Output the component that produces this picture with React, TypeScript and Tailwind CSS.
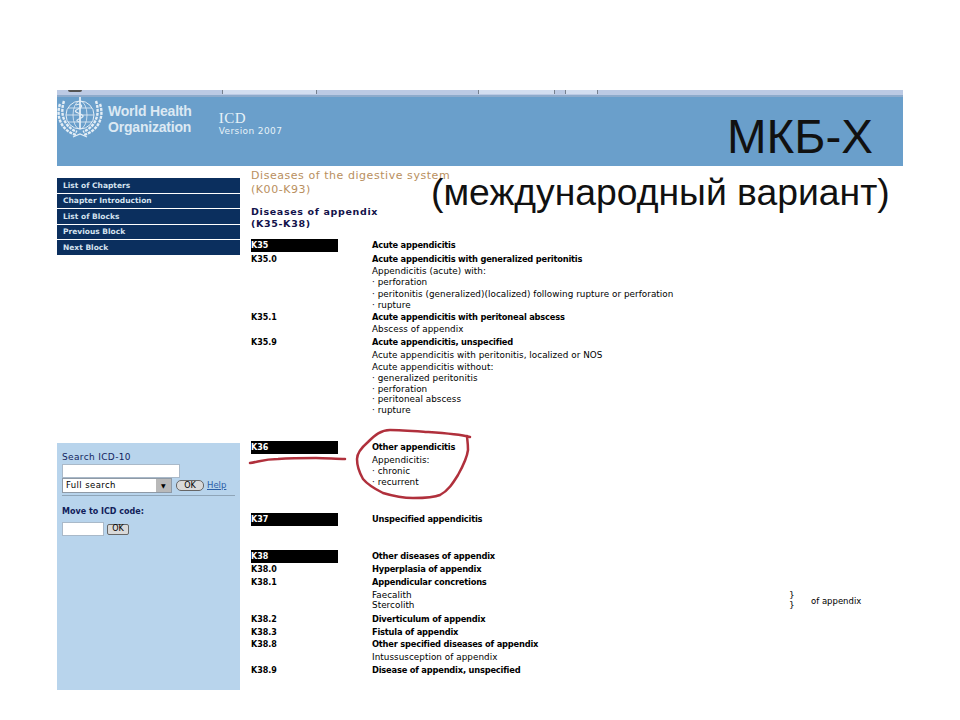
const NAV = ['List of Chapters', 'Chapter Introduction', 'List of Blocks', 'Previous Block', 'Next Block']

type Row = { code?: string; bar?: boolean; bold?: boolean; text?: string; h: string; brace?: boolean; note?: boolean }

const ROWS: Row[] = [
  { code: 'K35', bar: true, bold: true, text: 'Acute appendicitis', h: 'h-[14px]' },
  { code: 'K35.0', bold: true, text: 'Acute appendicitis with generalized peritonitis', h: 'h-[12px]' },
  { text: 'Appendicitis (acute) with:', h: 'h-[11px]' },
  { text: '· perforation', h: 'h-[12px]' },
  { text: '· peritonitis (generalized)(localized) following rupture or perforation', h: 'h-[11px]' },
  { text: '· rupture', h: 'h-[12px]' },
  { code: 'K35.1', bold: true, text: 'Acute appendicitis with peritoneal abscess', h: 'h-[12px]' },
  { text: 'Abscess of appendix', h: 'h-[13px]' },
  { code: 'K35.9', bold: true, text: 'Acute appendicitis, unspecified', h: 'h-[13px]' },
  { text: 'Acute appendicitis with peritonitis, localized or NOS', h: 'h-[12px]' },
  { text: 'Acute appendicitis without:', h: 'h-[11px]' },
  { text: '· generalized peritonitis', h: 'h-[11px]' },
  { text: '· perforation', h: 'h-[10px]' },
  { text: '· peritoneal abscess', h: 'h-[11px]' },
  { text: '· rupture', h: 'h-[37px]' },
  { code: 'K36', bar: true, bold: true, text: 'Other appendicitis', h: 'h-[13px]' },
  { text: 'Appendicitis:', h: 'h-[11px]' },
  { text: '· chronic', h: 'h-[11px]' },
  { text: '· recurrent', h: 'h-[37px]' },
  { code: 'K37', bar: true, bold: true, text: 'Unspecified appendicitis', h: 'h-[37px]' },
  { code: 'K38', bar: true, bold: true, text: 'Other diseases of appendix', h: 'h-[13px]' },
  { code: 'K38.0', bold: true, text: 'Hyperplasia of appendix', h: 'h-[13px]' },
  { code: 'K38.1', bold: true, text: 'Appendicular concretions', h: 'h-[13px]' },
  { text: 'Faecalith', h: 'h-[10px]', brace: true, note: true },
  { text: 'Stercolith', h: 'h-[14px]', brace: true },
  { code: 'K38.2', bold: true, text: 'Diverticulum of appendix', h: 'h-[13px]' },
  { code: 'K38.3', bold: true, text: 'Fistula of appendix', h: 'h-[12px]' },
  { code: 'K38.8', bold: true, text: 'Other specified diseases of appendix', h: 'h-[13px]' },
  { text: 'Intussusception of appendix', h: 'h-[13px]' },
  { code: 'K38.9', bold: true, text: 'Disease of appendix, unspecified', h: 'h-[12px]' },
]

function WhoLogo() {
  return (
    <svg viewBox="0 0 46 42" className="h-[42px] w-[46px] shrink-0" fill="none" stroke="#e4eef6" aria-hidden>
      <circle cx="23" cy="18" r="14" strokeWidth="1" />
      <ellipse cx="23" cy="18" rx="7" ry="14" strokeWidth="0.8" />
      <path d="M9 18h28M11 11h24M11 25h24" strokeWidth="0.8" />
      <path d="M23 0v32" strokeWidth="1.8" />
      <path d="M19 8c4-2 8 1 4 3s-7 3-2 5 7 3 3 5-6 2-2 4" strokeWidth="1.2" />
      <path d="M3 7C-1 18 3 33 19 38M7 4C3 16 6 29 20 35" strokeWidth="2.4" strokeDasharray="3 1" />
      <path d="M43 7c4 11 0 26-16 31M39 4c4 12 1 25-13 31" strokeWidth="2.4" strokeDasharray="3 1" />
      <path d="M16 40l7-3 7 3" strokeWidth="1.2" />
    </svg>
  )
}

function Tab({ className }: { className: string }) {
  return <div className={`h-[4px] border-x border-[#77818f] bg-[#d3def0] ${className}`} />
}

export default function App() {
  return (
    <div className="relative h-[720px] w-[960px] overflow-hidden bg-white font-['DejaVu_Sans',sans-serif] text-black">
      <div className="pt-[90px]">
        <div className="mx-[57px]">
          <div className="flex h-[7px] items-start border-b-2 border-[#8eabcc] bg-[#bccae4] pl-[11px]">
            <div className="h-[2px] w-[14px] rounded-b bg-[#555]" />
            <Tab className="ml-[140px] w-[95px]" />
            <Tab className="ml-[161px] w-[77px]" />
            <Tab className="ml-[10px] w-[33px]" />
          </div>
          <div className="flex h-[69px] items-start bg-[#6a9fcb]">
            <WhoLogo />
            <div className="ml-[5px] mt-[6px] font-['Liberation_Sans',sans-serif] text-[14px] font-bold leading-[16px] tracking-[-0.2px] text-[#dce9f3]">
              <div>World Health</div>
              <div>Organization</div>
            </div>
            <div className="ml-[27px] mt-[14px] text-[#e6f2f8]">
              <div className="font-['Liberation_Serif',serif] text-[15px] leading-[14px] tracking-[0.5px]">ICD</div>
              <div className="mt-[1px] text-[9px] leading-[11px] tracking-[0.4px]">Version 2007</div>
            </div>
          </div>
        </div>

        <div className="mx-[57px] flex gap-[11px]">
          <aside className="w-[183px] shrink-0 pt-[12px]">
            <nav className="flex flex-col gap-px">
              {NAV.map((n) => (
                <div key={n} className="flex h-[14.5px] items-center bg-[#0b2f5e] pl-[6px] text-[7.5px] font-bold text-[#d5e2ef]">
                  {n}
                </div>
              ))}
            </nav>
            <div className="mt-[188.5px] h-[247px] bg-[#b8d4ec] px-[5px] pt-[8px]">
              <div className="text-[9px] leading-[13px] tracking-[0.35px] text-[#12245e]">Search ICD-10</div>
              <div className="h-[14px] w-[118px] border border-[#a9b9c9] bg-white" />
              <div className="flex h-[15px] items-center">
                <div className="flex h-[15px] w-[110px] items-center justify-between border border-[#8f9aa6] bg-white pl-[3px] text-[8.5px] tracking-[0.4px]">
                  Full search
                  <span className="flex h-full w-[15px] items-center justify-center bg-[#b9b9b9] text-[6px]">▼</span>
                </div>
                <div className="ml-[4px] flex h-[11px] w-[28px] items-center justify-center rounded-[5px] border border-[#666] bg-[#d9d9d9] text-[8px]">OK</div>
                <div className="ml-[3px] text-[8.5px] text-[#2b5fa8] underline">Help</div>
              </div>
              <div className="mt-[2px] w-[173px] border-t border-[#8fa5b8]" />
              <div className="mt-[10px] text-[8px] font-bold leading-[12px] text-[#10205a]">Move to ICD code:</div>
              <div className="mt-[4px] flex items-center">
                <div className="h-[14px] w-[42px] border border-[#a9b9c9] bg-white" />
                <div className="ml-[3px] flex h-[11px] w-[22px] items-center justify-center rounded-[2px] border border-[#666] bg-[#d9d9d9] text-[8px]">OK</div>
              </div>
            </div>
          </aside>

          <main className="flex-1 pt-[3px]">
            <div className="text-[11px] leading-[14px] tracking-[0.55px] text-[#b98f5e]">
              <div>Diseases of the digestive system</div>
              <div>(K00-K93)</div>
            </div>
            <div className="mt-[9px] text-[9.5px] font-bold leading-[12px] tracking-[0.65px] text-[#12124a]">
              <div>Diseases of appendix</div>
              <div>(K35-K38)</div>
            </div>
            <div className="mt-[9px]">
              {ROWS.map((r, i) => (
                <div key={i} className={`relative flex leading-[13px] ${r.h}`}>
                  <div className="w-[121px] shrink-0">
                    {r.code &&
                      (r.bar ? (
                        <div className="h-[13px] w-[87px] bg-black text-[8px] font-bold leading-[13px] text-white">{r.code}</div>
                      ) : (
                        <div className="text-[8px] font-bold">{r.code}</div>
                      ))}
                  </div>
                  <div className={r.bold ? 'text-[8.3px] font-bold tracking-[-0.2px]' : 'text-[8.8px] tracking-[0.05px]'}>{r.text}</div>
                  {r.brace && <div className="absolute left-[538px] top-0 text-[9px]">{'}'}</div>}
                  {r.note && <div className="absolute left-[560px] top-[6px] text-[8.5px]">of appendix</div>}
                </div>
              ))}
            </div>
          </main>
        </div>
      </div>

      {/* slide title and marker strokes sit over the screenshot */}
      <div className="absolute left-[727px] top-[110px] font-['Liberation_Sans',sans-serif] text-[47.5px] leading-[53px] text-[#111]">МКБ-Х</div>
      <div className="absolute left-[431px] top-[172px] font-['Liberation_Sans',sans-serif] text-[37.3px] leading-[41px] text-[#111]">(международный вариант)</div>
      <svg viewBox="0 0 960 720" className="pointer-events-none absolute inset-0 h-[720px] w-[960px]" fill="none" stroke="#b0303c" strokeWidth="2.5" strokeLinecap="round" aria-hidden>
        <path d="M250 463c8-1 14-4 28-4 14-1 26-1 38-1 10 0 20 1 29 1" />
        <path d="M470 437c-12-3-28-4-43-5-14-1-27-2-37-2-9 0-15 5-22 12-7 6-11 11-11 17 0 7 2 13 6 20 5 6 12 10 20 14 10 3 20 5 30 5 10 0 20 0 27-3 8-4 13-12 18-20 5-9 9-17 10-25 0-7-1-12-1-14" />
      </svg>
    </div>
  )
}
